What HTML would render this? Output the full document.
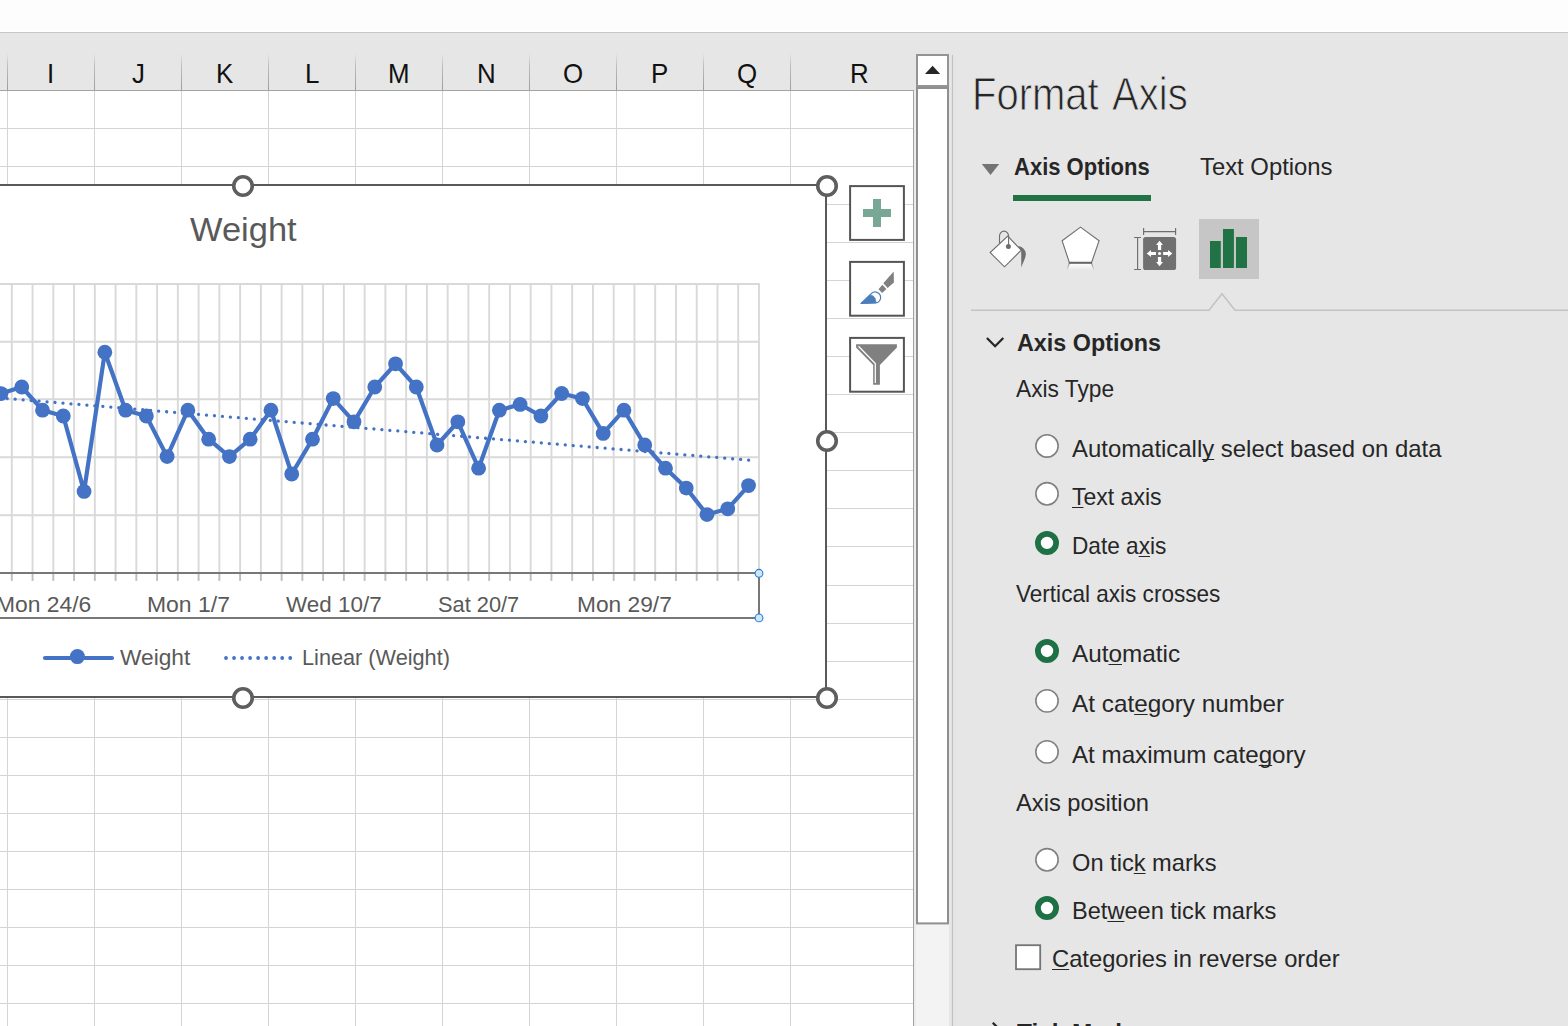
<!DOCTYPE html>
<html><head><meta charset="utf-8"><title>Format Axis</title>
<style>
html,body{margin:0;padding:0}
body{width:1568px;height:1026px;overflow:hidden;position:relative;background:#e6e6e6;font-family:"Liberation Sans",sans-serif}
.top{position:absolute;left:0;top:0;width:1568px;height:31px;background:#fdfdfd;border-bottom:1px solid #fff;box-shadow:0 1px 0 #c6c6c6}
.sheet{position:absolute;left:0;top:91px;width:913px;height:935px;background:#fff;border-right:1px solid #a2a2a2}
.hline{position:absolute;left:0;top:90px;width:914px;height:1px;background:#a3a3a3}
.v{position:absolute;top:0;width:1px;height:935px;background:#d4d4d4}
.h{position:absolute;left:0;width:913px;height:1px;background:#d4d4d4;margin-top:-91px}
.cd{position:absolute;top:53px;width:1px;height:37px;background:linear-gradient(#e6e6e6 0%,#bdbdbd 35%,#9e9e9e 100%)}
svg.g{position:absolute;left:0;top:0}
.t{position:absolute;white-space:nowrap;line-height:1;transform-origin:0 0}
u{text-decoration:underline;text-decoration-thickness:1.4px;text-underline-offset:2px;text-decoration-skip-ink:none}
</style></head><body>
<div class="top"></div>
<div class="sheet"><i class="v" style="left:7px"></i><i class="v" style="left:94px"></i><i class="v" style="left:181px"></i><i class="v" style="left:268px"></i><i class="v" style="left:355px"></i><i class="v" style="left:442px"></i><i class="v" style="left:529px"></i><i class="v" style="left:616px"></i><i class="v" style="left:703px"></i><i class="v" style="left:790px"></i><i class="h" style="top:128px"></i><i class="h" style="top:166px"></i><i class="h" style="top:204px"></i><i class="h" style="top:242px"></i><i class="h" style="top:280px"></i><i class="h" style="top:318px"></i><i class="h" style="top:356px"></i><i class="h" style="top:394px"></i><i class="h" style="top:432px"></i><i class="h" style="top:470px"></i><i class="h" style="top:508px"></i><i class="h" style="top:546px"></i><i class="h" style="top:585px"></i><i class="h" style="top:623px"></i><i class="h" style="top:661px"></i><i class="h" style="top:699px"></i><i class="h" style="top:737px"></i><i class="h" style="top:775px"></i><i class="h" style="top:813px"></i><i class="h" style="top:851px"></i><i class="h" style="top:889px"></i><i class="h" style="top:927px"></i><i class="h" style="top:965px"></i><i class="h" style="top:1003px"></i></div>
<div class="hline"></div>
<i class="cd" style="left:7px"></i><i class="cd" style="left:94px"></i><i class="cd" style="left:181px"></i><i class="cd" style="left:268px"></i><i class="cd" style="left:355px"></i><i class="cd" style="left:442px"></i><i class="cd" style="left:529px"></i><i class="cd" style="left:616px"></i><i class="cd" style="left:703px"></i><i class="cd" style="left:790px"></i>
<svg class="g" width="1568" height="1026" viewBox="0 0 1568 1026" >
<rect x="-20" y="185" width="846" height="512" fill="#fff" stroke="#595959" stroke-width="2"/>
<g stroke="#d9d9d9" stroke-width="1.9" fill="none">
<path d="M-20 284.0H759.6"/>
<path d="M-20 341.8H759.6"/>
<path d="M-20 399.3H759.6"/>
<path d="M-20 457.3H759.6"/>
<path d="M-20 515.2H759.6"/>
<path d="M11.80 283V573"/>
<path d="M32.55 283V573"/>
<path d="M53.31 283V573"/>
<path d="M74.06 283V573"/>
<path d="M94.82 283V573"/>
<path d="M115.57 283V573"/>
<path d="M136.33 283V573"/>
<path d="M157.09 283V573"/>
<path d="M177.84 283V573"/>
<path d="M198.59 283V573"/>
<path d="M219.35 283V573"/>
<path d="M240.10 283V573"/>
<path d="M260.86 283V573"/>
<path d="M281.62 283V573"/>
<path d="M302.37 283V573"/>
<path d="M323.12 283V573"/>
<path d="M343.88 283V573"/>
<path d="M364.63 283V573"/>
<path d="M385.39 283V573"/>
<path d="M406.14 283V573"/>
<path d="M426.90 283V573"/>
<path d="M447.65 283V573"/>
<path d="M468.41 283V573"/>
<path d="M489.16 283V573"/>
<path d="M509.92 283V573"/>
<path d="M530.67 283V573"/>
<path d="M551.43 283V573"/>
<path d="M572.18 283V573"/>
<path d="M592.94 283V573"/>
<path d="M613.69 283V573"/>
<path d="M634.45 283V573"/>
<path d="M655.20 283V573"/>
<path d="M675.96 283V573"/>
<path d="M696.71 283V573"/>
<path d="M717.47 283V573"/>
<path d="M738.22 283V573"/>
<path d="M758.98 283V573"/>
</g>
<g stroke="#bdbdbd" stroke-width="1.9">
<path d="M11.80 573V580.9"/>
<path d="M32.55 573V580.9"/>
<path d="M53.31 573V580.9"/>
<path d="M74.06 573V580.9"/>
<path d="M94.82 573V580.9"/>
<path d="M115.57 573V580.9"/>
<path d="M136.33 573V580.9"/>
<path d="M157.09 573V580.9"/>
<path d="M177.84 573V580.9"/>
<path d="M198.59 573V580.9"/>
<path d="M219.35 573V580.9"/>
<path d="M240.10 573V580.9"/>
<path d="M260.86 573V580.9"/>
<path d="M281.62 573V580.9"/>
<path d="M302.37 573V580.9"/>
<path d="M323.12 573V580.9"/>
<path d="M343.88 573V580.9"/>
<path d="M364.63 573V580.9"/>
<path d="M385.39 573V580.9"/>
<path d="M406.14 573V580.9"/>
<path d="M426.90 573V580.9"/>
<path d="M447.65 573V580.9"/>
<path d="M468.41 573V580.9"/>
<path d="M489.16 573V580.9"/>
<path d="M509.92 573V580.9"/>
<path d="M530.67 573V580.9"/>
<path d="M551.43 573V580.9"/>
<path d="M572.18 573V580.9"/>
<path d="M592.94 573V580.9"/>
<path d="M613.69 573V580.9"/>
<path d="M634.45 573V580.9"/>
<path d="M655.20 573V580.9"/>
<path d="M675.96 573V580.9"/>
<path d="M696.71 573V580.9"/>
<path d="M717.47 573V580.9"/>
<path d="M738.22 573V580.9"/>
</g>
<path d="M-20 573H759V618H-20" stroke="#787878" stroke-width="2" fill="none"/>
<path d="M748.6 460.1L-30 395.42" stroke="#4472c4" stroke-width="3.3" stroke-linecap="round" stroke-dasharray="0.01 7.99" fill="none"/>
<polyline points="-20,396.60 1.00,393.60 21.77,387.00 42.53,410.20 63.30,416.00 84.06,491.40 104.83,352.20 125.59,410.20 146.36,416.00 167.12,456.60 187.88,410.20 208.65,439.20 229.42,456.60 250.18,439.20 270.94,410.20 291.71,474.00 312.48,439.20 333.24,398.60 354.00,421.80 374.77,387.00 395.54,363.80 416.30,387.00 437.06,445.00 457.83,421.80 478.60,468.20 499.36,410.20 520.12,404.40 540.89,416.00 561.65,393.50 582.42,398.60 603.19,433.40 623.95,410.20 644.72,445.00 665.48,468.20 686.25,488.10 707.01,514.60 727.77,508.80 748.54,485.60" stroke="#4472c4" stroke-width="4.2" stroke-linejoin="round" stroke-linecap="round" fill="none"/>
<g fill="#4472c4">
<circle cx="1.00" cy="393.60" r="7.4"/>
<circle cx="21.77" cy="387.00" r="7.4"/>
<circle cx="42.53" cy="410.20" r="7.4"/>
<circle cx="63.30" cy="416.00" r="7.4"/>
<circle cx="84.06" cy="491.40" r="7.4"/>
<circle cx="104.83" cy="352.20" r="7.4"/>
<circle cx="125.59" cy="410.20" r="7.4"/>
<circle cx="146.36" cy="416.00" r="7.4"/>
<circle cx="167.12" cy="456.60" r="7.4"/>
<circle cx="187.88" cy="410.20" r="7.4"/>
<circle cx="208.65" cy="439.20" r="7.4"/>
<circle cx="229.42" cy="456.60" r="7.4"/>
<circle cx="250.18" cy="439.20" r="7.4"/>
<circle cx="270.94" cy="410.20" r="7.4"/>
<circle cx="291.71" cy="474.00" r="7.4"/>
<circle cx="312.48" cy="439.20" r="7.4"/>
<circle cx="333.24" cy="398.60" r="7.4"/>
<circle cx="354.00" cy="421.80" r="7.4"/>
<circle cx="374.77" cy="387.00" r="7.4"/>
<circle cx="395.54" cy="363.80" r="7.4"/>
<circle cx="416.30" cy="387.00" r="7.4"/>
<circle cx="437.06" cy="445.00" r="7.4"/>
<circle cx="457.83" cy="421.80" r="7.4"/>
<circle cx="478.60" cy="468.20" r="7.4"/>
<circle cx="499.36" cy="410.20" r="7.4"/>
<circle cx="520.12" cy="404.40" r="7.4"/>
<circle cx="540.89" cy="416.00" r="7.4"/>
<circle cx="561.65" cy="393.50" r="7.4"/>
<circle cx="582.42" cy="398.60" r="7.4"/>
<circle cx="603.19" cy="433.40" r="7.4"/>
<circle cx="623.95" cy="410.20" r="7.4"/>
<circle cx="644.72" cy="445.00" r="7.4"/>
<circle cx="665.48" cy="468.20" r="7.4"/>
<circle cx="686.25" cy="488.10" r="7.4"/>
<circle cx="707.01" cy="514.60" r="7.4"/>
<circle cx="727.77" cy="508.80" r="7.4"/>
<circle cx="748.54" cy="485.60" r="7.4"/>
</g>
<path d="M45 658H112" stroke="#4472c4" stroke-width="4.2" stroke-linecap="round"/>
<circle cx="77.4" cy="656.6" r="7.5" fill="#4472c4"/>
<path d="M226 658H291" stroke="#4472c4" stroke-width="3.8" stroke-linecap="round" stroke-dasharray="0.01 8.02"/>
<circle cx="759" cy="573.3" r="3.9" fill="#d0e6f7" stroke="#1f7fd8" stroke-width="1.1"/>
<circle cx="759" cy="617.9" r="3.9" fill="#d0e6f7" stroke="#1f7fd8" stroke-width="1.1"/>
<circle cx="243" cy="186" r="9.25" fill="#fff" stroke="#5e5e5e" stroke-width="3.6"/>
<circle cx="827" cy="186" r="9.25" fill="#fff" stroke="#5e5e5e" stroke-width="3.6"/>
<circle cx="827" cy="441" r="9.25" fill="#fff" stroke="#5e5e5e" stroke-width="3.6"/>
<circle cx="827" cy="698" r="9.25" fill="#fff" stroke="#5e5e5e" stroke-width="3.6"/>
<circle cx="243" cy="698" r="9.25" fill="#fff" stroke="#5e5e5e" stroke-width="3.6"/>
<rect x="850.1" y="186.1" width="53.8" height="53.8" fill="#fff" stroke="#555" stroke-width="2"/>
<rect x="850.1" y="261.9" width="53.8" height="53.8" fill="#fff" stroke="#555" stroke-width="2"/>
<rect x="850.1" y="337.9" width="53.8" height="53.8" fill="#fff" stroke="#555" stroke-width="2"/>
<path d="M863 209h28v8h-28zM873 199h8v28h-8z" fill="#78a796"/>
<path d="M893.7 271.6L893.9 282.6L887.6 288L883.3 283.3z" fill="#808080"/>
<path d="M882.4 284.8L886.4 289.1L882.2 292.9L878.5 289.3z" fill="#808080"/>
<path d="M861 303.5L871.3 293.6A5.5 5.5 0 1 1 875.3 303z" fill="#fff" stroke="#4a7ebb" stroke-width="1.25" stroke-linejoin="round"/>
<path d="M861 303.5L869.9 294.9C873 295 875.9 297.6 875.8 301.2L876.8 302.7A5.5 5.5 0 0 1 875.3 303z" fill="#4a7ebb" stroke="#4a7ebb" stroke-width="0.5" stroke-linejoin="round"/>
<path d="M856.1 344.2H896.9V347.6L879.9 365V384.7H873.15V365L856.1 347.6z" fill="#808080"/>
<path d="M858.5 346.2L875.3 363.5V382.9" stroke="#fff" stroke-width="1.25" fill="none" stroke-linejoin="miter"/>
<rect x="916" y="54" width="33" height="972" fill="#f3f3f3"/>
<rect x="914" y="91" width="2" height="935" fill="#ececec"/>
<rect x="917" y="88" width="31" height="835.4" fill="#fff" stroke="#8f8f8f" stroke-width="2"/>
<rect x="917" y="55" width="31" height="31" fill="#fff" stroke="#949494" stroke-width="2"/>
<path d="M925 74H940.2L932.6 65.8z" fill="#262626"/>
<path d="M952.5 55V1026" stroke="#c2c2c2" stroke-width="1.2"/>
<path d="M981.8 163.9H999.2L990.5 175.1z" fill="#737373"/>
<rect x="1013" y="195" width="138" height="6" fill="#217346"/>
<path d="M999.5 243.6V236A4.55 4.9 0 0 1 1008.6 236V246" fill="none" stroke="#6e6e6e" stroke-width="1.1"/>
<path d="M1007.8 236.1L1021.2 250.2L1004.5 266.8L990.1 252.5z" fill="#fff" stroke="#6e6e6e" stroke-width="1.1" stroke-linejoin="miter"/>
<path d="M1008.6 236.6V246" fill="none" stroke="#6e6e6e" stroke-width="1.1"/>
<circle cx="1008.4" cy="246.5" r="2.5" fill="#6e6e6e"/>
<path d="M1017.7 246C1021 246.1 1024.4 248.4 1025.6 252.2C1026.8 257 1023 262 1021.3 267.8L1021.2 250.4z" fill="#6e6e6e"/>
<defs><linearGradient id="pg" x1="0" y1="0" x2="0" y2="1"><stop offset="0" stop-color="#fff"/><stop offset="1" stop-color="#fff" stop-opacity="0"/></linearGradient><linearGradient id="pl" gradientUnits="userSpaceOnUse" x1="0" y1="263" x2="0" y2="270.5"><stop offset="0" stop-color="#8a8a8a"/><stop offset="1" stop-color="#8a8a8a" stop-opacity="0"/></linearGradient></defs>
<path d="M1069.4 263.5H1091.5L1094 270.5H1067z" fill="url(#pg)"/>
<path d="M1069.4 263L1067 270.5M1091.5 263L1094 270.5" stroke="url(#pl)" stroke-width="1.1" fill="none"/>
<path d="M1080.5 227.1L1099.1 240.7L1091.5 262.7H1069.4L1062.1 240.7z" fill="#fff" stroke="#6e6e6e" stroke-width="1.1" stroke-linejoin="miter"/>
<path d="M1068.9 262.75H1092" stroke="#666" stroke-width="2"/>
<rect x="1143.1" y="237" width="33" height="33" rx="2.6" fill="#707070"/>
<path d="M1143.6 231.6H1175.6M1143.6 228V234.9M1175.6 228V234.9M1137.6 237.5V269.5M1134.1 237.5H1141M1134.1 269.5H1141" stroke="#6e6e6e" stroke-width="1.15" fill="none"/>
<g fill="#fff"><path d="M1159.55 240.70L1163.00 245.00L1161.17 245.00L1161.17 249.90L1157.93 249.90L1157.93 245.00L1156.10 245.00z"/><path d="M1159.55 266.30L1156.10 262.00L1157.93 262.00L1157.93 257.10L1161.17 257.10L1161.17 262.00L1163.00 262.00z"/><path d="M1146.75 253.50L1151.05 250.05L1151.05 251.88L1155.95 251.88L1155.95 255.12L1151.05 255.12L1151.05 256.95z"/><path d="M1172.35 253.50L1168.05 256.95L1168.05 255.12L1163.15 255.12L1163.15 251.88L1168.05 251.88L1168.05 250.05z"/><circle cx="1159.55" cy="253.5" r="1.5"/></g>
<rect x="1199" y="219" width="60" height="60" fill="#c6c6c6"/>
<path d="M1210 241h10.8v27h-10.8zM1223 229h10.9v39h-10.9zM1236 237h11v31h-11z" fill="#217346"/>
<path d="M971 310.2H1209L1222 293.7L1235 310.2H1568" stroke="#c3c3c3" stroke-width="1.6" fill="none"/>
<path d="M986.9 338L995.1 346.2L1003.3 338" stroke="#262626" stroke-width="2.3" fill="none"/>
<path d="M992.8 1022.8L1001 1031" stroke="#262626" stroke-width="2.3" fill="none"/>
<circle cx="1047" cy="445.97" r="11.15" fill="#fff" stroke="#808080" stroke-width="1.6"/>
<circle cx="1047" cy="493.8" r="11.15" fill="#fff" stroke="#808080" stroke-width="1.6"/>
<circle cx="1047" cy="542.9" r="9.1" fill="#fff" stroke="#1e7145" stroke-width="5.8"/>
<circle cx="1047" cy="650.95" r="9.1" fill="#fff" stroke="#1e7145" stroke-width="5.8"/>
<circle cx="1047" cy="700.85" r="11.15" fill="#fff" stroke="#808080" stroke-width="1.6"/>
<circle cx="1047" cy="751.9" r="11.15" fill="#fff" stroke="#808080" stroke-width="1.6"/>
<circle cx="1047" cy="859.8" r="11.15" fill="#fff" stroke="#808080" stroke-width="1.6"/>
<circle cx="1047" cy="908.07" r="9.1" fill="#fff" stroke="#1e7145" stroke-width="5.8"/>
<rect x="1016" y="945.2" width="24.2" height="24" fill="#fff" stroke="#757575" stroke-width="1.8"/>
</svg>
<span class="t" style="left:47.36px;top:60.00px;font-size:27.5px;color:#111;transform:scaleX(0.9400);">I</span>
<span class="t" style="left:131.54px;top:60.00px;font-size:27.5px;color:#111;transform:scaleX(0.9400);">J</span>
<span class="t" style="left:216.42px;top:60.00px;font-size:27.5px;color:#111;transform:scaleX(0.9400);">K</span>
<span class="t" style="left:304.83px;top:60.00px;font-size:27.5px;color:#111;transform:scaleX(0.9400);">L</span>
<span class="t" style="left:388.19px;top:60.00px;font-size:27.5px;color:#111;transform:scaleX(0.9400);">M</span>
<span class="t" style="left:476.72px;top:60.00px;font-size:27.5px;color:#111;transform:scaleX(0.9400);">N</span>
<span class="t" style="left:562.89px;top:60.00px;font-size:27.5px;color:#111;transform:scaleX(0.9400);">O</span>
<span class="t" style="left:651.42px;top:60.00px;font-size:27.5px;color:#111;transform:scaleX(0.9400);">P</span>
<span class="t" style="left:736.89px;top:60.00px;font-size:27.5px;color:#111;transform:scaleX(0.9400);">Q</span>
<span class="t" style="left:850.32px;top:60.00px;font-size:27.5px;color:#111;transform:scaleX(0.9400);">R</span>
<span class="t" style="left:189.50px;top:213.00px;font-size:33px;color:#595959;transform:scaleX(1.0441);">Weight</span>
<span class="t" style="left:-4.50px;top:594.00px;font-size:22px;color:#595959;transform:scaleX(1.0376);">Mon 24/6</span>
<span class="t" style="left:146.80px;top:594.00px;font-size:22px;color:#595959;transform:scaleX(1.0428);">Mon 1/7</span>
<span class="t" style="left:285.50px;top:594.00px;font-size:22px;color:#595959;transform:scaleX(1.0197);">Wed 10/7</span>
<span class="t" style="left:437.90px;top:594.00px;font-size:22px;color:#595959;transform:scaleX(0.9915);">Sat 20/7</span>
<span class="t" style="left:576.60px;top:594.00px;font-size:22px;color:#595959;transform:scaleX(1.0332);">Mon 29/7</span>
<span class="t" style="left:120.20px;top:647.00px;font-size:22px;color:#595959;transform:scaleX(1.0324);">Weight</span>
<span class="t" style="left:301.70px;top:647.00px;font-size:22px;color:#595959;transform:scaleX(0.9860);">Linear (Weight)</span>
<span class="t" style="left:971.75px;top:72.00px;font-size:45.5px;color:#262626;word-spacing:5px;-webkit-text-stroke:0.9px #e6e6e6;transform:scaleX(0.8795);">Format Axis</span>
<span class="t" style="left:1014.30px;top:155.00px;font-size:24px;color:#262626;font-weight:bold;transform:scaleX(0.9169);">Axis Options</span>
<span class="t" style="left:1199.80px;top:155.00px;font-size:24px;color:#262626;transform:scaleX(0.9933);">Text Options</span>
<span class="t" style="left:1017.40px;top:331.00px;font-size:24px;color:#262626;font-weight:bold;transform:scaleX(0.9723);">Axis Options</span>
<span class="t" style="left:1015.90px;top:377.00px;font-size:24px;color:#262626;transform:scaleX(0.9469);">Axis Type</span>
<span class="t" style="left:1071.60px;top:437.00px;font-size:24px;color:#262626;transform:scaleX(0.9962);">Automaticall<u>y</u> select based on data</span>
<span class="t" style="left:1071.80px;top:485.00px;font-size:24px;color:#262626;transform:scaleX(0.9587);"><u>T</u>ext axis</span>
<span class="t" style="left:1072.40px;top:534.00px;font-size:24px;color:#262626;transform:scaleX(0.9430);">Date a<u>x</u>is</span>
<span class="t" style="left:1016.20px;top:582.00px;font-size:24px;color:#262626;transform:scaleX(0.9398);">Vertical axis crosses</span>
<span class="t" style="left:1071.60px;top:642.00px;font-size:24px;color:#262626;transform:scaleX(1.0126);">Aut<u>o</u>matic</span>
<span class="t" style="left:1071.60px;top:692.00px;font-size:24px;color:#262626;transform:scaleX(1.0129);">At cat<u>e</u>gory number</span>
<span class="t" style="left:1071.60px;top:743.00px;font-size:24px;color:#262626;transform:scaleX(1.0069);">At maximum cate<u>g</u>ory</span>
<span class="t" style="left:1015.80px;top:791.00px;font-size:24px;color:#262626;transform:scaleX(0.9870);">Axis position</span>
<span class="t" style="left:1072.00px;top:851.00px;font-size:24px;color:#262626;transform:scaleX(0.9847);">On tic<u>k</u> marks</span>
<span class="t" style="left:1072.40px;top:899.00px;font-size:24px;color:#262626;transform:scaleX(0.9822);">Bet<u>w</u>een tick marks</span>
<span class="t" style="left:1051.60px;top:947.00px;font-size:24px;color:#262626;transform:scaleX(0.9888);"><u>C</u>ategories in reverse order</span>
<span class="t" style="left:1016.90px;top:1021.00px;font-size:24px;color:#262626;font-weight:bold;transform:scaleX(1.0141);">Tick Marks</span>
</body></html>
